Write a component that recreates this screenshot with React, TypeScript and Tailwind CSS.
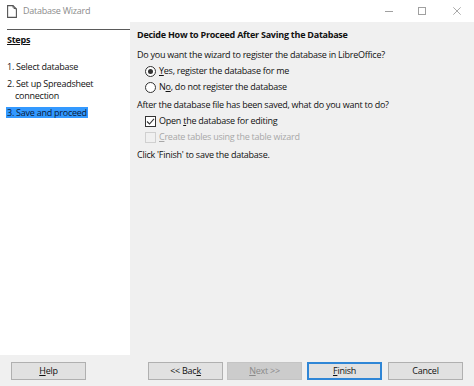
import React from "react";

const F = { fontFamily: '"Open Sans", "Noto Sans", sans-serif', letterSpacing: "-0.25px" };

function Radio({ checked }: { checked: boolean }) {
  return (
    <span className="w-[11px] h-[11px] rounded-full border border-[#333] bg-white flex items-center justify-center shrink-0">
      {checked && <span className="w-[5px] h-[5px] rounded-full bg-[#333]" />}
    </span>
  );
}

function Check({ checked, disabled }: { checked: boolean; disabled?: boolean }) {
  return (
    <span
      className={`w-[11px] h-[11px] border flex items-center justify-center shrink-0 ${
        disabled ? "border-[#d0d0d0] bg-[#f0f0f0]" : "border-[#333] bg-white"
      }`}
    >
      {checked && (
        <svg width="9" height="9" viewBox="0 0 9 9">
          <path d="M1 4.5 L3.5 7 L8 1.8" fill="none" stroke="#333" strokeWidth="1.1" />
        </svg>
      )}
    </span>
  );
}

function Btn({ children, variant }: { children: React.ReactNode; variant?: "default" | "disabled" }) {
  const base = "w-[75px] h-[18px] flex items-center justify-center text-[9px] shrink-0";
  const cls =
    variant === "default"
      ? "border-2 border-[#2f86d6] bg-[#e1e1e1] text-[#111]"
      : variant === "disabled"
      ? "border border-[#c4c4c4] bg-[#cccccc] text-[#8a8a8a]"
      : "border border-[#b0b0b0] bg-[#e1e1e1] text-[#111]";
  return <div className={`${base} ${cls}`}>{children}</div>;
}

function Row({ children, className = "" }: { children: React.ReactNode; className?: string }) {
  return <div className={`h-[16px] flex items-center whitespace-nowrap ${className}`}>{children}</div>;
}

export default function App() {
  return (
    <div className="w-[474px] h-[386px] bg-[#f0f0f0] flex flex-col overflow-hidden text-[#111]" style={F}>
      <div className="h-[22px] bg-white flex items-center shrink-0">
        <svg className="ml-[7px]" width="10" height="13" viewBox="0 0 10 13">
          <path d="M0.6 0.6 H6 L9.4 4 V12.4 H0.6 Z" fill="white" stroke="#555" strokeWidth="1.1" />
          <path d="M6 0.6 V2.2 Q6 3.8 9.4 3.8" fill="none" stroke="#555" strokeWidth="1" />
        </svg>
        <span className="ml-[6px] text-[9px] text-[#8c8c8c]">Database Wizard</span>
        <div className="ml-auto flex items-center h-full">
          <div className="w-[8px] h-px bg-[#a0a0a0] mr-[25px]" />
          <div className="w-[8px] h-[8px] border border-[#a0a0a0] mr-[27px]" />
          <svg width="8" height="8" viewBox="0 0 8 8" className="mr-[13px]">
            <path d="M0.3 0.3 L7.7 7.7 M7.7 0.3 L0.3 7.7" stroke="#a0a0a0" strokeWidth="0.9" />
          </svg>
        </div>
      </div>
      <div className="flex h-[333px] shrink-0">
        <div className="w-[130px] bg-white pt-[7px] shrink-0 text-[9px] whitespace-nowrap flex flex-col">
          <div className="ml-[7px] h-px bg-[#5a5a5a]" />
          <Row className="ml-[7px] mt-[2px] font-bold underline">Steps</Row>
          <div className="mt-[13px] ml-[7px] h-[12px] flex items-center">1. Select database</div>
          <div className="mt-[5px] ml-[7px] leading-[12px]">
            <div>2. Set up Spreadsheet</div>
            <div className="pl-[8px]">connection</div>
          </div>
          <div className="mt-[5px] ml-[6px] self-start h-[11px] bg-[#3399ff] flex items-center pl-[1px] pr-[1px] text-[#0b1a38]">
            3. Save and proceed
          </div>
        </div>
        <div className="flex-1 pl-[7px] pt-[5px] text-[9px]">
          <Row className="font-bold">Decide How to Proceed After Saving the Database</Row>
          <Row className="mt-[4px]">Do you want the wizard to register the database in LibreOffice?</Row>
          <Row className="ml-[8px] gap-[3px]">
            <Radio checked />
            <span><u>Y</u>es, register the database for me</span>
          </Row>
          <Row className="ml-[8px] gap-[3px]">
            <Radio checked={false} />
            <span>N<u>o</u>, do not register the database</span>
          </Row>
          <Row className="mt-[2px]">After the database file has been saved, what do you want to do?</Row>
          <Row className="ml-[8px] gap-[3px]">
            <Check checked />
            <span>Open <u>t</u>he database for editing</span>
          </Row>
          <Row className="ml-[8px] gap-[3px] text-[#a8a8a8]">
            <Check checked={false} disabled />
            <span><u>C</u>reate tables using the table wizard</span>
          </Row>
          <Row className="mt-[2px]">Click 'Finish' to save the database.</Row>
        </div>
      </div>
      <div className="flex-1 flex items-start pt-[7px] pl-[11px]">
        <Btn><u>H</u>elp</Btn>
        <div className="ml-[62px] flex">
          <Btn>&lt;&lt; Bac<u>k</u></Btn>
          <div className="ml-[4px]"><Btn variant="disabled"><u>N</u>ext &gt;&gt;</Btn></div>
          <div className="ml-[5px]"><Btn variant="default"><u>F</u>inish</Btn></div>
          <div className="ml-[6px]"><Btn>Cancel</Btn></div>
        </div>
      </div>
    </div>
  );
}
